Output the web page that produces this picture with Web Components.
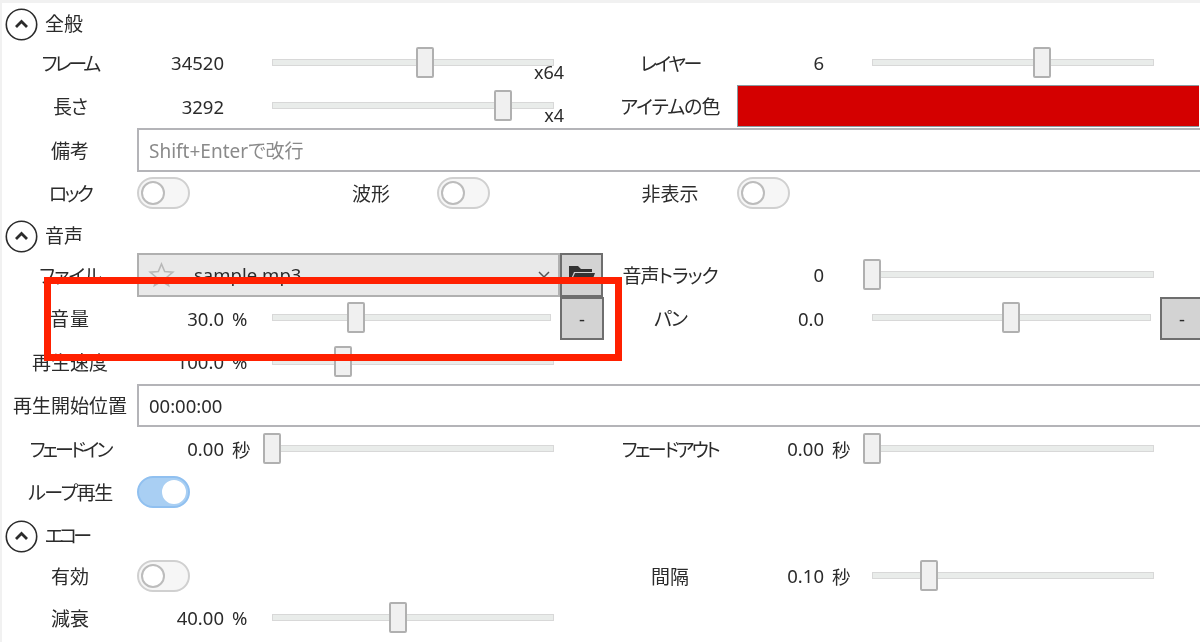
<!DOCTYPE html>
<html lang="ja">
<head>
<meta charset="utf-8">
<title>音声アイテム</title>
<style>
  html, body { margin: 0; background: #fff; }
  body { width: 1200px; height: 642px; overflow: hidden; }
</style>
</head>
<body>
<prop-panel>
  <sec-head style="--h:37px;--top:3px">全般</sec-head>
  <prop-row>
    <prop-cell label="フレーム" ls="-3"><val-text>34520</val-text><range-bar at="153" tag="x64"></range-bar></prop-cell>
    <prop-cell label="レイヤー" ls="-2.5"><val-text>6</val-text><range-bar at="170"></range-bar></prop-cell>
  </prop-row>
  <prop-row>
    <prop-cell label="長さ" ls="-1"><val-text>3292</val-text><range-bar at="231" tag="x4"></range-bar></prop-cell>
    <prop-cell label="アイテムの色" ls="-1"><color-box></color-box></prop-cell>
  </prop-row>
  <prop-row><prop-cell wide label="備考"><text-box hint>Shift+Enterで改行</text-box></prop-cell></prop-row>
  <prop-row>
    <prop-cell label="ロック" ls="-2.7"><tog-sw></tog-sw><sub-label>波形</sub-label><tog-sw></tog-sw></prop-cell>
    <prop-cell label="非表示"><tog-sw></tog-sw></prop-cell>
  </prop-row>

  <sec-head style="--h:38px;--top:5px">音声</sec-head>
  <prop-row>
    <prop-cell label="ファイル" ls="-1"><file-combo>sample.mp3</file-combo></prop-cell>
    <prop-cell label="音声トラック" ls="-1"><val-text>0</val-text><range-bar at="0"></range-bar></prop-cell>
  </prop-row>
  <prop-row>
    <prop-cell label="音量" ls="1"><val-text unit="%">30.0</val-text><range-bar short at="84"></range-bar><mini-btn>-</mini-btn></prop-cell>
    <prop-cell label="パン" ls="-2"><val-text>0.0</val-text><range-bar short at="139"></range-bar><mini-btn>-</mini-btn></prop-cell>
  </prop-row>
  <prop-row>
    <prop-cell label="再生速度"><val-text unit="%">100.0</val-text><range-bar at="71"></range-bar></prop-cell>
  </prop-row>
  <prop-row><prop-cell wide label="再生開始位置"><text-box>00:00:00</text-box></prop-cell></prop-row>
  <prop-row>
    <prop-cell label="フェードイン" ls="-3"><val-text unit="秒">0.00</val-text><range-bar at="0"></range-bar></prop-cell>
    <prop-cell label="フェードアウト" ls="-2.6"><val-text unit="秒">0.00</val-text><range-bar at="0"></range-bar></prop-cell>
  </prop-row>
  <prop-row><prop-cell label="ループ再生" ls="-1.4"><tog-sw on></tog-sw></prop-cell></prop-row>

  <sec-head style="--h:41px;--top:3px;--ls:-4px">エコー</sec-head>
  <prop-row style="--h:41.5px">
    <prop-cell label="有効"><tog-sw></tog-sw></prop-cell>
    <prop-cell label="間隔"><val-text unit="秒">0.10</val-text><range-bar at="57"></range-bar></prop-cell>
  </prop-row>
  <prop-row style="--h:42px"><prop-cell label="減衰"><val-text unit="%">40.00</val-text><range-bar at="126"></range-bar></prop-cell></prop-row>
</prop-panel>

<script>
// 小さい部品が多いのでテンプレート文字列で定義する
function shadow(el, html) {
    el.attachShadow({ mode: 'open' });
    el.shadowRoot.innerHTML = html;
}

class PropPanel extends HTMLElement {
    constructor() {
        super();
        shadow(this, `
            <style>
                :host {
                    display: block;
                    position: relative;
                    width: 1200px;
                    height: 642px;
                    box-sizing: border-box;
                    padding: 4px 0 0 2px;
                    overflow: hidden;
                    background: #fff;
                    color: #2b2b2b;
                    font: 18.5px "Noto Sans", "Noto Sans CJK JP", sans-serif;
                    font-feature-settings: "palt";
                    filter: blur(0.35px); /* 元画像が拡大でぼけている */
                }
                .edge-top { position: absolute; left: 0; top: 0; right: 0; height: 3px; background: #f1f1f1; }
                .edge-left { position: absolute; left: 0; top: 0; bottom: 0; width: 2px; background: #f1f1f1; }
                /* 赤枠の注釈 */
                .mark {
                    position: absolute;
                    left: 44px;
                    top: 277px;
                    width: 578px;
                    height: 84px;
                    box-sizing: border-box;
                    border: 7px solid #ff2000;
                }
            </style>
            <div class="edge-top"></div>
            <div class="edge-left"></div>
            <slot></slot>
            <div class="mark"></div>
        `);
    }
}

class SecHead extends HTMLElement {
    constructor() {
        super();
        shadow(this, `
            <style>
                :host {
                    display: flex;
                    align-items: center;
                    gap: 7px;
                    height: var(--h, 38px);
                    box-sizing: border-box;
                    padding: var(--top, 0) 0 0 3px;
                    font-size: 19px;
                    letter-spacing: var(--ls, 0);
                    line-height: 1;
                }
                svg { flex: none; }
            </style>
            <svg width="33" height="33" viewBox="0 0 33 33" fill="none" stroke="#2b2b2b">
                <circle cx="16.5" cy="16.5" r="15.2" stroke-width="1.6"/>
                <path d="M11 19l5.5-5.5L22 19" stroke-width="2.8"/>
            </svg>
            <slot></slot>
        `);
    }
}

class PropRow extends HTMLElement {
    constructor() {
        super();
        shadow(this, `
            <style>
                :host {
                    display: flex;
                    height: var(--h, 43.5px);
                    margin-left: -2px;
                }
            </style>
            <slot></slot>
        `);
    }
}

class PropCell extends HTMLElement {
    constructor() {
        super();
        shadow(this, `
            <style>
                :host {
                    display: flex;
                    align-items: center;
                    flex: 0 0 600px;
                    height: 100%;
                    min-width: 0;
                }
                :host([wide]) { flex: 0 0 1200px; }
                .name {
                    flex: 0 0 137px;
                    padding-left: 3px;
                    box-sizing: border-box;
                    font-size: 19px;
                    text-align: center;
                    white-space: nowrap;
                }
            </style>
            <div class="name"></div>
            <slot></slot>
        `);
        const name = this.shadowRoot.querySelector('.name');
        name.textContent = this.getAttribute('label');
        name.style.letterSpacing = (this.getAttribute('ls') || 0) + 'px';
    }
}

class ValText extends HTMLElement {
    constructor() {
        super();
        shadow(this, `
            <style>
                :host {
                    display: flex;
                    flex: 0 0 135px;
                    box-sizing: border-box;
                    white-space: nowrap;
                }
                .num { flex: 0 0 87px; text-align: right; }
                .unit { padding-left: 8px; }
            </style>
            <span class="num"><slot></slot></span>
            <span class="unit"></span>
        `);
        this.shadowRoot.querySelector('.unit').textContent = this.getAttribute('unit') || '';
    }
}

class RangeBar extends HTMLElement {
    constructor() {
        super();
        shadow(this, `
            <style>
                :host {
                    display: block;
                    position: relative;
                    flex: none;
                    width: 282px;
                    height: 7px;
                    margin-top: -1px;
                    box-sizing: border-box;
                    background: #e9ecea;
                    border: 1px solid #d8d8d8;
                }
                :host([short]) { width: 279px; }
                .thumb {
                    position: absolute;
                    top: -13px;
                    width: 18px;
                    height: 31px;
                    box-sizing: border-box;
                    background: #f0f0f0;
                    border: 2px solid #b0b0b0;
                    border-radius: 2px;
                }
                .tag {
                    position: absolute;
                    right: -11px;
                    top: 1px;
                    font-size: 18px;
                    line-height: 22px;
                }
            </style>
            <div class="thumb"></div>
            <div class="tag"></div>
        `);
        this.shadowRoot.querySelector('.thumb').style.left = (this.getAttribute('at') - 10) + 'px';
        this.shadowRoot.querySelector('.tag').textContent = this.getAttribute('tag') || '';
    }
}

class ColorBox extends HTMLElement {
    constructor() {
        super();
        shadow(this, `
            <style>
                :host {
                    display: block;
                    flex: 0 0 462px;
                    align-self: stretch;
                    margin-bottom: 1px;
                    box-sizing: border-box;
                    background: #d40000;
                    border: 1px solid #8a9aa0;
                    border-right: 0;
                }
            </style>
        `);
    }
}

class TextBox extends HTMLElement {
    constructor() {
        super();
        shadow(this, `
            <style>
                :host {
                    display: flex;
                    align-items: center;
                    flex: 1;
                    align-self: stretch;
                    box-sizing: border-box;
                    padding-left: 10px;
                    border: 2px solid #b4b4b8;
                    border-right: 0;
                    background: #fff;
                }
                :host([hint]) { color: #8a8a8a; font-size: 19px; }
            </style>
            <slot></slot>
        `);
    }
}

class TogSw extends HTMLElement {
    constructor() {
        super();
        shadow(this, `
            <style>
                :host {
                    display: flex;
                    align-items: center;
                    flex: none;
                    width: 53px;
                    height: 32px;
                    box-sizing: border-box;
                    padding: 0 2px;
                    border: 2px solid #d0d0d0;
                    border-radius: 16px;
                    background: #f6f6f6;
                }
                .knob {
                    width: 24px;
                    height: 24px;
                    box-sizing: border-box;
                    border: 2px solid #bcbcbc;
                    border-radius: 50%;
                    background: #fff;
                }
                :host([on]) {
                    justify-content: flex-end;
                    background: #a9cff3;
                    border-color: #90c0f0;
                }
                :host([on]) .knob { border-color: #fff; }
            </style>
            <div class="knob"></div>
        `);
    }
}

class SubLabel extends HTMLElement {
    constructor() {
        super();
        shadow(this, `
            <style>
                :host {
                    display: block;
                    flex: 0 0 247px;
                    box-sizing: border-box;
                    padding-right: 47px;
                    font-size: 19px;
                    text-align: right;
                }
            </style>
            <slot></slot>
        `);
    }
}

class FileCombo extends HTMLElement {
    constructor() {
        super();
        shadow(this, `
            <style>
                :host {
                    display: flex;
                    align-self: stretch;
                    flex: 0 0 466px;
                }
                .box {
                    display: flex;
                    align-items: center;
                    flex: 1;
                    box-sizing: border-box;
                    padding-left: 9px;
                    background: #e9e9e9;
                    border: 2px solid #b0b0b0;
                }
                .name { flex: 1; padding-left: 19px; }
                .chev { margin-right: 8px; }
                .open {
                    display: flex;
                    align-items: center;
                    justify-content: center;
                    flex: 0 0 43px;
                    box-sizing: border-box;
                    background: #d3d3d3;
                    border: 2px solid #6e6e6e;
                }
            </style>
            <div class="box">
                <svg width="27" height="26" viewBox="0 0 27 26" fill="none" stroke="#b8b8b8" stroke-width="1.6">
                    <path d="M13.5 2l3.2 7.6 8.1.6-6.2 5.3 2 8-7.1-4.3-7.1 4.3 2-8-6.2-5.3 8.1-.6z"/>
                </svg>
                <span class="name"><slot></slot></span>
                <svg class="chev" width="12" height="8" viewBox="0 0 12 8" fill="none" stroke="#555" stroke-width="1.5">
                    <path d="M1 1l5 5 5-5"/>
                </svg>
            </div>
            <div class="open">
                <svg width="28" height="22" viewBox="0 0 28 22">
                    <path fill="#333" d="M1 2h9l3 3h11v3H6L1 20z"/>
                    <path fill="#333" d="M7 9h20l-4 11H2z"/>
                </svg>
            </div>
        `);
    }
}

class MiniBtn extends HTMLElement {
    constructor() {
        super();
        shadow(this, `
            <style>
                :host {
                    display: flex;
                    align-items: center;
                    justify-content: center;
                    flex: none;
                    width: 44px;
                    height: 43px;
                    margin-left: 9px;
                    box-sizing: border-box;
                    background: #d3d3d3;
                    border: 2px solid #6e6e6e;
                }
            </style>
            <slot></slot>
        `);
    }
}

customElements.define('prop-panel', PropPanel);
customElements.define('sec-head', SecHead);
customElements.define('prop-row', PropRow);
customElements.define('prop-cell', PropCell);
customElements.define('val-text', ValText);
customElements.define('range-bar', RangeBar);
customElements.define('color-box', ColorBox);
customElements.define('text-box', TextBox);
customElements.define('tog-sw', TogSw);
customElements.define('sub-label', SubLabel);
customElements.define('file-combo', FileCombo);
customElements.define('mini-btn', MiniBtn);
</script>
</body>
</html>
